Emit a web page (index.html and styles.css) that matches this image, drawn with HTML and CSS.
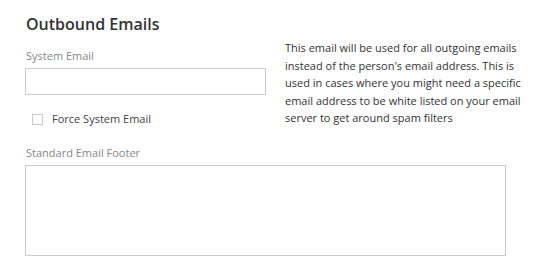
FILE: index.html
```html
<!DOCTYPE html>
<html lang="en">
<head>
    <meta charset="UTF-8">
    <meta name="viewport" content="width=device-width, initial-scale=1.0">
    <title>Outbound Emails</title>
    <link rel="stylesheet" href="styles.css">
</head>
<body>
    <div class="panel">
        <h2>Outbound Emails</h2>

        <div class="row">
            <div class="col-left">
                <label class="field-label" for="systemEmail">System Email</label>
                <input type="text" id="systemEmail" class="text-input">
                <label class="check">
                    <span class="check-box"></span>
                    Force System Email
                </label>
            </div>
            <p class="help">
                This email will be used for all outgoing emails instead of the person's email address. This is used in cases where you might need a specific email address to be white listed on your email server to get around spam filters
            </p>
        </div>

        <label class="field-label footer-label" for="footer">Standard Email Footer</label>
        <textarea id="footer" class="text-area"></textarea>
    </div>
</body>
</html>
```

FILE: styles.css
```css
body {
    margin: 0;
    background: #fff;
    font-family: "Open Sans", sans-serif;
}

.panel {
    padding: 13px 0 0 25px;
}

h2 {
    margin: 0 0 0 1px;
    font-size: 16px;
    font-weight: 600;
    color: #333;
    line-height: 22px;
}

.row {
    display: flex;
    gap: 19px;
    margin-top: 4px;
    height: 88px;
}

.col-left {
    width: 241px;
    flex: none;
    display: flex;
    flex-direction: column;
    padding-top: 9px;
}

.field-label {
    display: block;
    font-size: 11px;
    color: #888;
    margin-left: 1px;
    line-height: 16px;
}

.text-input {
    box-sizing: border-box;
    width: 241px;
    height: 27px;
    margin: 4px 0 0;
    border: 1px solid #ccc;
    border-radius: 0;
    padding: 0 6px;
}

.check {
    display: flex;
    align-items: center;
    gap: 9px;
    margin: 18px 0 0 7px;
    font-size: 11px;
    color: #444;
    line-height: 12px;
}

.check-box {
    width: 9px;
    height: 9px;
    border: 1px solid #ccc;
    background: #fff;
}

.help {
    flex: none;
    margin: 0;
    width: 238px;
    font-size: 11px;
    line-height: 17.5px;
    color: #333;
}

.footer-label {
    margin-top: 18px;
}

.text-area {
    display: block;
    box-sizing: border-box;
    width: 481px;
    height: 91px;
    margin: 4px 0 0;
    border: 1px solid #ccc;
    border-radius: 0;
    resize: none;
}
```
